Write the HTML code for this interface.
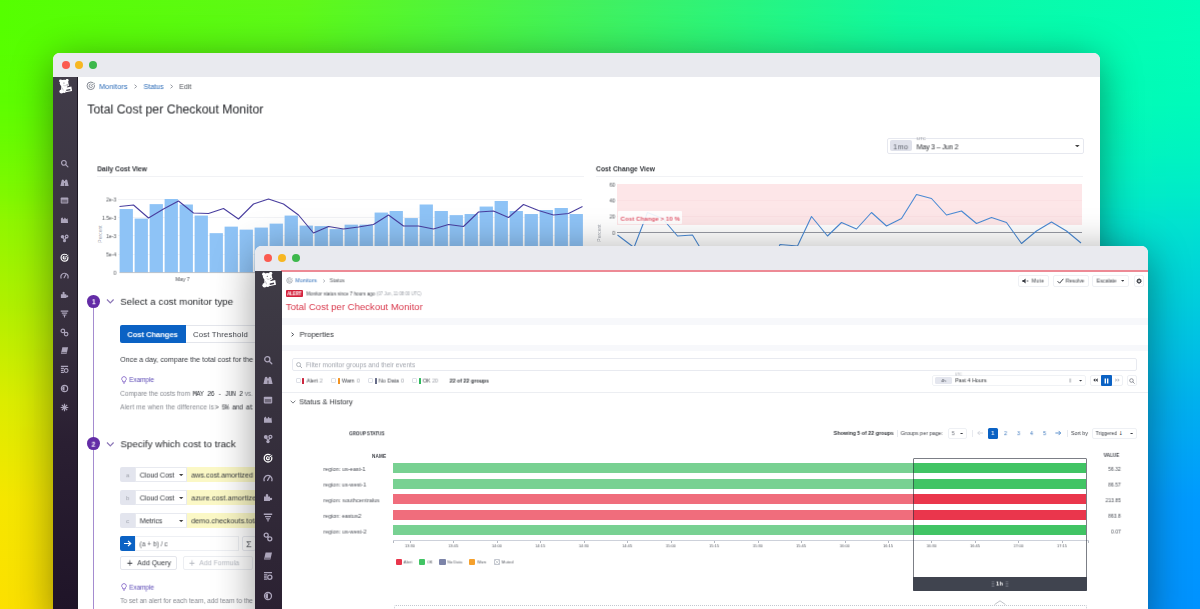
<!DOCTYPE html>
<html lang="en">
<head>
<meta charset="utf-8">
<title>Total Cost per Checkout Monitor</title>
<style>
html,body{margin:0;padding:0;}
html{overflow:hidden;width:1200px;height:609px;}
#stage{position:absolute;left:0;top:0;width:1200px;height:609px;overflow:hidden;}
body{width:1200px;height:609px;overflow:hidden;position:relative;font-family:"Liberation Sans",sans-serif;background:#00ccdd;}
.bg{position:absolute;left:0;top:0;width:1200px;height:609px;}
.bgR{background:linear-gradient(to bottom,#00ffb8 0%,#00f8be 16%,#00e8ce 33%,#00ccdd 50%,#00b0ee 66%,#009aff 82%,#0092ff 100%);}
.bgL{background:linear-gradient(to bottom,#55ff00 0%,#64fc00 16%,#88f800 33%,#b0f000 50%,#dcec00 66%,#f5e600 82%,#fce000 100%);
  -webkit-mask-image:linear-gradient(to right,rgba(0,0,0,1) 0%,rgba(0,0,0,.957) 12.5%,rgba(0,0,0,.844) 25%,rgba(0,0,0,.684) 37.5%,rgba(0,0,0,.5) 50%,rgba(0,0,0,.316) 62.5%,rgba(0,0,0,.156) 75%,rgba(0,0,0,.043) 87.5%,rgba(0,0,0,0) 100%);
  mask-image:linear-gradient(to right,rgba(0,0,0,1) 0%,rgba(0,0,0,.957) 12.5%,rgba(0,0,0,.844) 25%,rgba(0,0,0,.684) 37.5%,rgba(0,0,0,.5) 50%,rgba(0,0,0,.316) 62.5%,rgba(0,0,0,.156) 75%,rgba(0,0,0,.043) 87.5%,rgba(0,0,0,0) 100%);}
.bgT{height:220px;background:linear-gradient(to right,#55ff00 0%,#60f818 25%,#42f060 50%,#10f8a0 75%,#00ffb8 100%);
  -webkit-mask-image:linear-gradient(to bottom,rgba(0,0,0,1) 0%,rgba(0,0,0,.6) 30%,rgba(0,0,0,0) 100%);mask-image:linear-gradient(to bottom,rgba(0,0,0,1) 0%,rgba(0,0,0,.6) 30%,rgba(0,0,0,0) 100%);}
.win{position:absolute;overflow:hidden;background:#fff;border-radius:6.5px 6.5px 0 0;}
.shadow{position:absolute;border-radius:6.5px 6.5px 0 0;}
.win div,.win span,.win svg{position:absolute;}
.win div{box-sizing:border-box;}
.t{white-space:pre;display:block;left:0;top:0;transform-origin:0 0;}
.tl{border-radius:50%;}
</style>
</head>
<body>
<div id="stage">
<div class="bg bgR"></div>
<div class="bg bgL"></div>
<div class="bg bgT"></div>
<div class="shadow" style="left:53.3px;top:52.6px;width:1046.7px;height:570px;box-shadow:0 7px 40px rgba(0,0,0,0.4);"></div>
<div class="win" id="w1" style="left:53.3px;top:52.6px;width:1046.7px;height:570px;">
<div style="left:0.00px;top:0.00px;width:1046.70px;height:24.80px;background:#e9eaef;"></div>
<div class="tl" style="left:8.35px;top:8.30px;width:7.90px;height:7.90px;background:#fb5b50;"></div>
<div class="tl" style="left:22.15px;top:8.30px;width:7.90px;height:7.90px;background:#f7b722;"></div>
<div class="tl" style="left:35.95px;top:8.30px;width:7.90px;height:7.90px;background:#3db84c;"></div>
<div style="left:0.00px;top:24.80px;width:24.60px;height:531.60px;background:linear-gradient(to bottom,#413c49 0%,#362e3d 48%,#2a1f32 69%,#1f1428 100%);border-right:1px solid #1d1824;"></div>
<svg style="left:5.60px;top:26.51px;" width="13.2" height="14.97872340425532" viewBox="0 0 14.1 16"><g fill="#fff"><circle cx="1.7" cy="2.2" r="1.6"/><circle cx="8.7" cy="1.5" r="1.6"/><ellipse cx="5.5" cy="4.6" rx="4.6" ry="3.7"/><path d="M8.4 3.6 L10.9 6.6 L9.4 8 L6 7.6 Z"/><path d="M2.4 7 L8.6 7.2 L8.2 12.6 L2.2 13 Z"/><circle cx="2.6" cy="13.3" r="2.2"/><circle cx="5.6" cy="13.4" r="1.6"/><path d="M6 9.7 L13.2 8.1 L14 12.7 L7.2 14.2 Z"/></g><path d="M7.6 11.6 L12 10.6 L12.2 11.9 L7.9 12.9 Z" fill="#3f3a47"/><path d="M3.3 9.2 L4.6 12.2" stroke="#3f3a47" stroke-width="0.5" opacity="0.6"/><circle cx="5.3" cy="4.3" r="0.6" fill="#3f3a47" opacity="0.8"/><circle cx="8.7" cy="6.3" r="0.65" fill="#3f3a47" opacity="0.8"/><path d="M4.6 6.6 Q6 7.8 7.6 7" fill="none" stroke="#3f3a47" stroke-width="0.45" opacity="0.6"/></svg>
<svg style="left:7.20px;top:106.70px;" width="9" height="9" viewBox="0 0 10 10"><circle cx="4.3" cy="4.3" r="2.6" fill="none" stroke="#aca5bb" stroke-width="1.3" stroke-width="1.05"/><path d="M6.3 6.3 L8.8 8.8" fill="none" stroke="#aca5bb" stroke-width="1.3" stroke-width="1.2" stroke-linecap="round"/></svg>
<svg style="left:7.20px;top:125.20px;" width="9" height="9" viewBox="0 0 10 10"><path d="M0.4 9 L1.9 2.4 Q3.1 1 4.4 2.4 L4.7 9 Z M9.6 9 L8.1 2.4 Q6.9 1 5.6 2.4 L5.3 9 Z" fill="#aca5bb"/><rect x="4" y="3.4" width="2" height="2.2" fill="#aca5bb"/></svg>
<svg style="left:7.20px;top:143.90px;" width="9" height="9" viewBox="0 0 10 10"><rect x="0.8" y="1.8" width="8.4" height="6.6" rx="0.8" fill="#aca5bb"/><rect x="1.8" y="4" width="6.4" height="3.4" fill="#3f3a47" opacity="0.55"/></svg>
<svg style="left:7.20px;top:162.70px;" width="9" height="9" viewBox="0 0 10 10"><path d="M1 8.8 V4 L2.6 2.4 L4 5 L5.4 2.8 L7 4.6 L8.4 3.6 L9 8.8 Z" fill="#aca5bb"/></svg>
<svg style="left:7.20px;top:181.40px;" width="9" height="9" viewBox="0 0 10 10"><circle cx="2.8" cy="3" r="2" fill="#aca5bb"/><circle cx="7.4" cy="2.8" r="1.5" fill="none" stroke="#aca5bb" stroke-width="1.3"/><circle cx="5" cy="7.6" r="1.7" fill="#aca5bb"/><path d="M3.5 4 L5 7 L7 3.6" fill="none" stroke="#aca5bb" stroke-width="1.3" stroke-width="0.9"/></svg>
<svg style="left:7.20px;top:200.20px;" width="9" height="9" viewBox="0 0 10 10"><circle cx="5" cy="5.2" r="3.8" fill="none" stroke="#ffffff" stroke-width="1.3" stroke-width="1.5"/><circle cx="5" cy="5.2" r="1.5" fill="none" stroke="#ffffff" stroke-width="1.3" stroke-width="1.1"/><path d="M5 5.2 L9.4 2.2" stroke="#3f3a47" stroke-width="2.2"/><path d="M5 5.2 L9.2 2.4" stroke="#ffffff" stroke-width="1"/></svg>
<svg style="left:7.20px;top:218.90px;" width="9" height="9" viewBox="0 0 10 10"><path d="M1.4 8.2 A4 4 0 1 1 8.6 8.2" fill="none" stroke="#aca5bb" stroke-width="1.3"/><path d="M4.6 7.4 L6.6 3.8" fill="none" stroke="#aca5bb" stroke-width="1.3" stroke-linecap="round"/></svg>
<svg style="left:7.20px;top:237.70px;" width="9" height="9" viewBox="0 0 10 10"><path d="M1 9 V4.6 H3 Q2.2 2 4 2 Q5.8 2 5 4.6 H7 V6 Q9.2 5.2 9.2 7 Q9.2 8.6 7 8 V9 Z" fill="#aca5bb"/></svg>
<svg style="left:7.20px;top:256.40px;" width="9" height="9" viewBox="0 0 10 10"><path d="M0.8 1.6 H9.2 V3 H0.8 Z M2 4 H8 V5.2 H2 Z M3 6.2 H7 V7.2 H3 Z M4.4 7.2 H5.6 V9.4 H4.4 Z" fill="#aca5bb"/></svg>
<svg style="left:7.20px;top:275.10px;" width="9" height="9" viewBox="0 0 10 10"><circle cx="3.2" cy="3.2" r="2" fill="none" stroke="#aca5bb" stroke-width="1.3"/><circle cx="6.8" cy="6.8" r="2" fill="none" stroke="#aca5bb" stroke-width="1.3"/><path d="M4.4 4.4 L5.6 5.6" fill="none" stroke="#aca5bb" stroke-width="1.3"/></svg>
<svg style="left:7.20px;top:293.90px;" width="9" height="9" viewBox="0 0 10 10"><path d="M2.6 1.4 H9 L7.4 8.6 H1 Z" fill="#aca5bb"/><path d="M1.6 7.2 H7.4" stroke="#3f3a47" stroke-width="0.7"/></svg>
<svg style="left:7.20px;top:312.70px;" width="9" height="9" viewBox="0 0 10 10"><path d="M1 1.6 H9 M1 3.8 H4.4 M1 6 H3.8 M1 8.2 H4.4" fill="none" stroke="#aca5bb" stroke-width="1.3" stroke-width="1.1"/><circle cx="6.8" cy="6.2" r="2.1" fill="none" stroke="#aca5bb" stroke-width="1.3" stroke-width="1.1"/></svg>
<svg style="left:7.20px;top:331.40px;" width="9" height="9" viewBox="0 0 10 10"><circle cx="5" cy="5" r="3.5" fill="none" stroke="#aca5bb" stroke-width="1.3" stroke-width="1.1"/><path d="M5 2.4 A2.6 2.6 0 0 0 5 7.6 Z" fill="#aca5bb"/></svg>
<svg style="left:7.20px;top:350.10px;" width="9" height="9" viewBox="0 0 10 10"><circle cx="5" cy="5" r="2.2" fill="#aca5bb"/><path d="M5 0.8 V9.2 M0.8 5 H9.2 M2 2 L8 8 M8 2 L2 8" fill="none" stroke="#aca5bb" stroke-width="1.3" stroke-width="1"/></svg>
<svg style="left:33.10px;top:28.80px;" width="9.6" height="9.6" viewBox="0 0 10 10"><circle cx="5" cy="5" r="3.9" fill="none" stroke="#80858e" stroke-width="1"/><circle cx="5" cy="5" r="1.8" fill="none" stroke="#80858e" stroke-width="0.9"/><path d="M5 5 L9.6 2" stroke="#fff" stroke-width="2.2"/><path d="M5 5 L9.2 2.3" stroke="#80858e" stroke-width="0.9"/></svg>
<span class="t" style="transform:perspective(100000px) translate3d(46.20px,30.00px,1px);font-size:7.21px;line-height:7.21px;letter-spacing:0.107px;color:#2c6cb8;">Monitors</span>
<svg style="left:80.20px;top:31.30px;" width="5" height="5" viewBox="0 0 5 5"><path d="M1.5 0.7 L3.7 2.5 L1.5 4.3" fill="none" stroke="#9a9ea6" stroke-width="1"/></svg>
<span class="t" style="transform:perspective(100000px) translate3d(90.50px,30.00px,1px);font-size:7.21px;line-height:7.21px;letter-spacing:-0.073px;color:#2c6cb8;">Status</span>
<svg style="left:116.00px;top:31.30px;" width="5" height="5" viewBox="0 0 5 5"><path d="M1.5 0.7 L3.7 2.5 L1.5 4.3" fill="none" stroke="#9a9ea6" stroke-width="1"/></svg>
<span class="t" style="transform:perspective(100000px) translate3d(126.20px,30.00px,1px);font-size:7.21px;line-height:7.21px;letter-spacing:-0.081px;color:#55595f;">Edit</span>
<span class="t" style="transform:perspective(100000px) translate3d(34.30px,50.44px,1px);font-size:12.34px;line-height:12.34px;letter-spacing:0.000px;color:#24262a;">Total Cost per Checkout Monitor</span>
<div style="left:834.20px;top:85.80px;width:197.00px;height:15.40px;background:#fff;border:1px solid #e6e8ef;border-radius:2px;"></div>
<div style="left:837.00px;top:87.90px;width:21.50px;height:10.60px;background:#dfe1ea;border-radius:2px;"></div>
<span class="t" style="transform:perspective(100000px) translate3d(840.20px,90.30px,1px);font-size:7.21px;line-height:7.21px;letter-spacing:0.425px;color:#5a5e68;">1mo</span>
<span class="t" style="transform:perspective(100000px) translate3d(863.70px,84.10px,1px);font-size:4.38px;line-height:4.38px;letter-spacing:0.000px;color:#85888f;">UTC</span>
<span class="t" style="transform:perspective(100000px) translate3d(863.50px,91.30px,1px);font-size:7.11px;line-height:7.11px;letter-spacing:-0.228px;color:#2f3237;">May 3 – Jun 2</span>
<svg style="left:1022.00px;top:92.25px;" width="4.6" height="2.3" viewBox="0 0 4 2"><path d="M0 0 H4 L2 2 Z" fill="#444"/></svg>
<span class="t" style="transform:perspective(100000px) translate3d(44.30px,113.30px,1px);font-size:6.75px;line-height:6.75px;letter-spacing:-0.023px;color:#2f3237;font-weight:700;">Daily Cost View</span>
<div style="left:43.70px;top:123.40px;width:487.50px;height:0.80px;background:#f1f2f5;"></div>
<span class="t" style="transform:perspective(100000px) translate3d(53.29px,144.44px,1px);font-size:5.00px;line-height:5.00px;letter-spacing:0.000px;color:#44484e;">2e-3</span>
<div style="left:65.20px;top:146.10px;width:464.00px;height:0.60px;background:#f2f3f6;"></div>
<span class="t" style="transform:perspective(100000px) translate3d(49.12px,162.76px,1px);font-size:5.00px;line-height:5.00px;letter-spacing:0.000px;color:#44484e;">1.5e-3</span>
<div style="left:65.20px;top:164.42px;width:464.00px;height:0.60px;background:#f2f3f6;"></div>
<span class="t" style="transform:perspective(100000px) translate3d(53.29px,181.09px,1px);font-size:5.00px;line-height:5.00px;letter-spacing:0.000px;color:#44484e;">1e-3</span>
<div style="left:65.20px;top:182.75px;width:464.00px;height:0.60px;background:#f2f3f6;"></div>
<span class="t" style="transform:perspective(100000px) translate3d(53.29px,199.42px,1px);font-size:5.00px;line-height:5.00px;letter-spacing:0.000px;color:#44484e;">5e-4</span>
<div style="left:65.20px;top:201.08px;width:464.00px;height:0.60px;background:#f2f3f6;"></div>
<span class="t" style="transform:perspective(100000px) translate3d(60.52px,217.74px,1px);font-size:5.00px;line-height:5.00px;letter-spacing:0.000px;color:#44484e;">0</span>
<span class="t" style="left:37.00px;top:178.40px;width:20px;text-align:center;font-size:5px;line-height:6px;color:#a4a8b0;transform-origin:50% 50%;transform:rotate(-90deg);">Percent</span>
<svg style="left:44.40px;top:137.80px;" width="490" height="90" viewBox="0 0 490 90"><g fill="#8ec3f6"><rect x="21.60" y="19.04" width="13.3" height="63.26"/><rect x="36.60" y="28.57" width="13.3" height="53.73"/><rect x="51.60" y="14.13" width="13.3" height="68.17"/><rect x="66.60" y="9.00" width="13.3" height="73.30"/><rect x="81.60" y="14.50" width="13.3" height="67.80"/><rect x="96.60" y="25.57" width="13.3" height="56.73"/><rect x="111.60" y="43.16" width="13.3" height="39.14"/><rect x="126.60" y="36.63" width="13.3" height="45.67"/><rect x="141.60" y="39.64" width="13.3" height="42.66"/><rect x="156.60" y="37.59" width="13.3" height="44.71"/><rect x="171.60" y="33.63" width="13.3" height="48.67"/><rect x="186.60" y="25.57" width="13.3" height="56.73"/><rect x="201.60" y="35.61" width="13.3" height="46.69"/><rect x="216.60" y="36.12" width="13.3" height="46.18"/><rect x="231.60" y="39.13" width="13.3" height="43.17"/><rect x="246.60" y="34.66" width="13.3" height="47.65"/><rect x="261.60" y="34.66" width="13.3" height="47.65"/><rect x="276.60" y="22.56" width="13.3" height="59.74"/><rect x="291.60" y="21.02" width="13.3" height="61.28"/><rect x="306.60" y="28.06" width="13.3" height="54.24"/><rect x="321.60" y="14.50" width="13.3" height="67.80"/><rect x="336.60" y="21.02" width="13.3" height="61.28"/><rect x="351.60" y="25.13" width="13.3" height="57.17"/><rect x="366.60" y="24.03" width="13.3" height="58.27"/><rect x="381.60" y="16.55" width="13.3" height="65.75"/><rect x="396.60" y="10.98" width="13.3" height="71.32"/><rect x="411.60" y="21.02" width="13.3" height="61.28"/><rect x="426.60" y="24.03" width="13.3" height="58.27"/><rect x="441.60" y="20.00" width="13.3" height="62.31"/><rect x="456.60" y="18.02" width="13.3" height="64.28"/><rect x="471.60" y="24.03" width="13.3" height="58.27"/></g><path d="M21.5 82.6 H485" stroke="#9aa0aa" stroke-width="0.6"/><polyline points="21.5,16.5 35.5,15.0 50.5,28.0 65.5,19.0 80.5,11.0 95.5,23.0 110.5,23.5 125.5,18.5 140.5,29.0 155.5,14.0 170.5,9.0 185.5,14.0 200.5,25.0 215.5,43.0 230.5,36.5 245.5,39.0 260.5,37.0 275.5,34.5 290.5,25.0 305.5,36.0 320.5,36.0 335.5,39.0 350.5,34.5 365.5,36.5 380.5,22.0 395.5,21.0 410.5,27.5 425.5,14.5 440.5,20.5 455.5,25.0 470.5,23.5 484.5,16.5" fill="none" stroke="#4a3f9f" stroke-width="1.1" stroke-linejoin="round"/></svg>
<span class="t" style="transform:perspective(100000px) translate3d(122.50px,224.04px,1px);font-size:5.15px;line-height:5.15px;letter-spacing:0.035px;color:#44484e;">May 7</span>
<span class="t" style="transform:perspective(100000px) translate3d(542.90px,113.30px,1px);font-size:6.75px;line-height:6.75px;letter-spacing:0.015px;color:#2f3237;font-weight:700;">Cost Change View</span>
<div style="left:542.70px;top:123.40px;width:487.50px;height:0.80px;background:#f1f2f5;"></div>
<div style="left:564.20px;top:131.40px;width:464.50px;height:40.60px;background:#fde6e8;"></div>
<div style="left:564.20px;top:147.10px;width:464.50px;height:0.60px;background:#fbe0e3;"></div>
<div style="left:564.20px;top:163.10px;width:464.50px;height:0.60px;background:#fbe0e3;"></div>
<span class="t" style="transform:perspective(100000px) translate3d(556.54px,129.64px,1px);font-size:5.00px;line-height:5.00px;letter-spacing:0.000px;color:#44484e;">60</span>
<span class="t" style="transform:perspective(100000px) translate3d(556.54px,145.44px,1px);font-size:5.00px;line-height:5.00px;letter-spacing:0.000px;color:#44484e;">40</span>
<span class="t" style="transform:perspective(100000px) translate3d(556.54px,161.44px,1px);font-size:5.00px;line-height:5.00px;letter-spacing:0.000px;color:#44484e;">20</span>
<span class="t" style="transform:perspective(100000px) translate3d(559.32px,177.84px,1px);font-size:5.00px;line-height:5.00px;letter-spacing:0.000px;color:#44484e;">0</span>
<div style="left:564.20px;top:179.50px;width:464.50px;height:0.70px;background:#979ba4;"></div>
<span class="t" style="left:536.20px;top:177.40px;width:20px;text-align:center;font-size:5px;line-height:6px;color:#a4a8b0;transform-origin:50% 50%;transform:rotate(-90deg);">Percent</span>
<svg style="left:542.70px;top:127.40px;" width="490" height="110" viewBox="0 0 490 110"><polyline points="21.5,55.0 38.0,67.5 51.5,32.5 66.5,38.5 81.5,56.0 96.5,55.0 104.0,67.5 119.0,100.0 169.0,100.0 184.0,64.5 201.5,66.0 215.5,36.5 231.5,56.0 245.5,42.5 260.5,49.0 275.5,32.5 290.5,46.0 305.5,38.5 320.5,14.5 335.5,18.5 350.5,35.0 365.5,31.0 380.5,43.5 395.5,37.5 410.5,42.5 425.5,63.5 440.5,51.0 455.5,42.0 470.5,51.0 485.0,63.0" fill="none" stroke="#4a8ad4" stroke-width="1.1" stroke-linejoin="round"/></svg>
<div style="left:564.90px;top:158.70px;width:64.20px;height:12.60px;background:#ffffff;border-radius:1px;opacity:.9;"></div>
<span class="t" style="transform:perspective(100000px) translate3d(567.50px,162.74px,1px);font-size:6.00px;line-height:6.00px;letter-spacing:0.105px;color:#e2566a;font-weight:700;">Cost Change &gt; 10 %</span>
<div style="left:39.90px;top:248.40px;width:1.00px;height:320.00px;background:#a58cd0;"></div>
<div style="left:34.00px;top:242.30px;width:12.80px;height:12.80px;background:#632ca6;border-radius:50%;"></div>
<span class="t" style="transform:perspective(100000px) translate3d(39.00px,246.24px,1px);font-size:6.50px;line-height:6.50px;letter-spacing:-0.815px;color:#fff;font-weight:700;">1</span>
<svg style="left:52.70px;top:244.90px;" width="8.6" height="8.6" viewBox="0 0 7 7"><path d="M0.8 2 L3.5 4.8 L6.2 2" fill="none" stroke="#8d78b8" stroke-width="1"/></svg>
<span class="t" style="transform:perspective(100000px) translate3d(67.20px,243.81px,1px);font-size:9.79px;line-height:9.79px;letter-spacing:0.018px;color:#24262a;">Select a cost monitor type</span>
<div style="left:67.20px;top:272.10px;width:65.50px;height:18.80px;background:#0b62c4;border-radius:2px 0 0 2px;"></div>
<span class="t" style="transform:perspective(100000px) translate3d(74.30px,278.10px,1px);font-size:7.73px;line-height:7.73px;letter-spacing:-0.114px;color:#fff;font-weight:700;">Cost Changes</span>
<div style="left:132.70px;top:272.10px;width:75.00px;height:18.80px;background:#fff;border:1px solid #e4e6ec;border-left:none;"></div>
<span class="t" style="transform:perspective(100000px) translate3d(140.00px,278.04px,1px);font-size:7.73px;line-height:7.73px;letter-spacing:0.195px;color:#3a3d44;">Cost Threshold</span>
<span class="t" style="transform:perspective(100000px) translate3d(67.20px,303.90px,1px);font-size:7.11px;line-height:7.11px;letter-spacing:0.029px;color:#33363c;">Once a day, compare the total cost for the</span>
<svg style="left:67.60px;top:323.00px;" width="6" height="8" viewBox="0 0 6 8"><path d="M3 0.6 A2.3 2.3 0 0 1 4.3 4.8 V5.8 H1.7 V4.8 A2.3 2.3 0 0 1 3 0.6 Z M2 7 H4" fill="none" stroke="#7c5cc4" stroke-width="0.8"/></svg>
<span class="t" style="transform:perspective(100000px) translate3d(76.30px,324.04px,1px);font-size:6.49px;line-height:6.49px;letter-spacing:-0.064px;color:#5a48b5;">Example</span>
<span class="t" style="transform:perspective(100000px) translate3d(67.20px,337.84px,1px);font-size:6.59px;line-height:6.59px;letter-spacing:-0.014px;color:#85888f;">Compare the costs from</span>
<span class="t" style="transform:perspective(100000px) translate3d(139.70px,337.90px,1px);font-size:6.80px;line-height:6.80px;letter-spacing:-0.523px;color:#33363c;font-family:'Liberation Mono',monospace;">MAY 26 - JUN 2</span>
<span class="t" style="transform:perspective(100000px) translate3d(191.70px,337.84px,1px);font-size:6.59px;line-height:6.59px;letter-spacing:-0.340px;color:#85888f;">vs.</span>
<span class="t" style="transform:perspective(100000px) translate3d(67.20px,351.34px,1px);font-size:6.59px;line-height:6.59px;letter-spacing:0.118px;color:#85888f;">Alert me when the difference is</span>
<span class="t" style="transform:perspective(100000px) translate3d(161.70px,351.40px,1px);font-size:6.80px;line-height:6.80px;letter-spacing:-0.626px;color:#33363c;font-family:'Liberation Mono',monospace;">&gt; 5% and at</span>
<div style="left:34.00px;top:384.80px;width:12.80px;height:12.80px;background:#632ca6;border-radius:50%;"></div>
<span class="t" style="transform:perspective(100000px) translate3d(38.60px,388.74px,1px);font-size:6.50px;line-height:6.50px;letter-spacing:0.185px;color:#fff;font-weight:700;">2</span>
<svg style="left:52.70px;top:387.30px;" width="8.6" height="8.6" viewBox="0 0 7 7"><path d="M0.8 2 L3.5 4.8 L6.2 2" fill="none" stroke="#8d78b8" stroke-width="1"/></svg>
<span class="t" style="transform:perspective(100000px) translate3d(67.40px,386.21px,1px);font-size:9.79px;line-height:9.79px;letter-spacing:0.006px;color:#24262a;">Specify which cost to track</span>
<div style="left:67.20px;top:414.90px;width:14.80px;height:14.50px;background:#e3e5ee;border-radius:2px 0 0 2px;"></div>
<span class="t" style="transform:perspective(100000px) translate3d(73.10px,419.20px,1px);font-size:6.00px;line-height:6.00px;letter-spacing:-0.337px;color:#a0a4ae;">a</span>
<div style="left:82.00px;top:414.90px;width:52.00px;height:14.50px;background:#fff;border:1px solid #e8eaf0;"></div>
<span class="t" style="transform:perspective(100000px) translate3d(86.70px,418.50px,1px);font-size:7.21px;line-height:7.21px;letter-spacing:-0.127px;color:#33363c;">Cloud Cost</span>
<svg style="left:126.10px;top:421.20px;" width="4.4" height="2.2" viewBox="0 0 4 2"><path d="M0 0 H4 L2 2 Z" fill="#444"/></svg>
<div style="left:134.00px;top:414.90px;width:120.00px;height:14.50px;background:#fbf8c6;"></div>
<span class="t" style="transform:perspective(100000px) translate3d(138.30px,418.50px,1px);font-size:7.21px;line-height:7.21px;letter-spacing:0.005px;color:#33363c;">aws.cost.amortized</span>
<div style="left:67.20px;top:437.80px;width:14.80px;height:14.50px;background:#e3e5ee;border-radius:2px 0 0 2px;"></div>
<span class="t" style="transform:perspective(100000px) translate3d(73.10px,442.10px,1px);font-size:6.00px;line-height:6.00px;letter-spacing:-0.337px;color:#a0a4ae;">b</span>
<div style="left:82.00px;top:437.80px;width:52.00px;height:14.50px;background:#fff;border:1px solid #e8eaf0;"></div>
<span class="t" style="transform:perspective(100000px) translate3d(86.70px,441.40px,1px);font-size:7.21px;line-height:7.21px;letter-spacing:-0.127px;color:#33363c;">Cloud Cost</span>
<svg style="left:126.10px;top:444.10px;" width="4.4" height="2.2" viewBox="0 0 4 2"><path d="M0 0 H4 L2 2 Z" fill="#444"/></svg>
<div style="left:134.00px;top:437.80px;width:120.00px;height:14.50px;background:#fbf8c6;"></div>
<span class="t" style="transform:perspective(100000px) translate3d(138.30px,441.40px,1px);font-size:7.21px;line-height:7.21px;letter-spacing:0.124px;color:#33363c;">azure.cost.amortized</span>
<div style="left:67.20px;top:460.70px;width:14.80px;height:14.50px;background:#e3e5ee;border-radius:2px 0 0 2px;"></div>
<span class="t" style="transform:perspective(100000px) translate3d(73.10px,465.00px,1px);font-size:6.00px;line-height:6.00px;letter-spacing:0.000px;color:#a0a4ae;">c</span>
<div style="left:82.00px;top:460.70px;width:52.00px;height:14.50px;background:#fff;border:1px solid #e8eaf0;"></div>
<span class="t" style="transform:perspective(100000px) translate3d(86.70px,464.30px,1px);font-size:7.21px;line-height:7.21px;letter-spacing:-0.090px;color:#33363c;">Metrics</span>
<svg style="left:126.10px;top:467.00px;" width="4.4" height="2.2" viewBox="0 0 4 2"><path d="M0 0 H4 L2 2 Z" fill="#444"/></svg>
<div style="left:134.00px;top:460.70px;width:120.00px;height:14.50px;background:#fbf8c6;"></div>
<span class="t" style="transform:perspective(100000px) translate3d(138.30px,464.30px,1px);font-size:7.21px;line-height:7.21px;letter-spacing:0.043px;color:#33363c;">demo.checkouts.total</span>
<div style="left:67.20px;top:483.80px;width:14.80px;height:14.50px;background:#0b62c4;border-radius:2px 0 0 2px;"></div>
<svg style="left:70.20px;top:487.40px;" width="9" height="7" viewBox="0 0 9 7"><path d="M1 3.5 H7.6 M5 1 L7.8 3.5 L5 6" fill="none" stroke="#fff" stroke-width="1.1"/></svg>
<div style="left:82.00px;top:483.80px;width:104.00px;height:14.50px;background:#fff;border:1px solid #eef0f4;"></div>
<span class="t" style="transform:perspective(100000px) translate3d(86.50px,488.30px,1px);font-size:6.63px;line-height:6.63px;letter-spacing:0.000px;color:#55595f;">(a + b) / c</span>
<div style="left:189.00px;top:483.80px;width:14.00px;height:14.50px;background:#fff;border:1px solid #e8eaf0;border-radius:2px;"></div>
<span class="t" style="transform:perspective(100000px) translate3d(193.10px,487.21px,1px);font-size:9.00px;line-height:9.00px;letter-spacing:0.436px;color:#55595f;">Σ</span>
<div style="left:67.20px;top:503.00px;width:56.20px;height:14.60px;background:#fff;border:1px solid #e4e6ec;border-radius:2px;"></div>
<span class="t" style="transform:perspective(100000px) translate3d(73.90px,505.70px,1px);font-size:10.00px;line-height:10.00px;letter-spacing:-0.040px;color:#3a3d44;">+</span>
<span class="t" style="transform:perspective(100000px) translate3d(84.30px,506.24px,1px);font-size:7.00px;line-height:7.00px;letter-spacing:0.038px;color:#33363c;">Add Query</span>
<div style="left:129.50px;top:503.00px;width:70.00px;height:14.60px;background:#fff;border:1px solid #eceef2;border-radius:2px;"></div>
<span class="t" style="transform:perspective(100000px) translate3d(136.10px,505.70px,1px);font-size:10.00px;line-height:10.00px;letter-spacing:-0.040px;color:#b4b8c0;">+</span>
<span class="t" style="transform:perspective(100000px) translate3d(146.30px,506.24px,1px);font-size:7.00px;line-height:7.00px;letter-spacing:-0.025px;color:#b4b8c0;">Add Formula</span>
<svg style="left:67.60px;top:530.80px;" width="6" height="8" viewBox="0 0 6 8"><path d="M3 0.6 A2.3 2.3 0 0 1 4.3 4.8 V5.8 H1.7 V4.8 A2.3 2.3 0 0 1 3 0.6 Z M2 7 H4" fill="none" stroke="#7c5cc4" stroke-width="0.8"/></svg>
<span class="t" style="transform:perspective(100000px) translate3d(76.30px,531.64px,1px);font-size:6.49px;line-height:6.49px;letter-spacing:-0.064px;color:#5a48b5;">Example</span>
<span class="t" style="transform:perspective(100000px) translate3d(67.20px,545.04px,1px);font-size:6.59px;line-height:6.59px;letter-spacing:0.001px;color:#85888f;">To set an alert for each team, add team to the</span>
</div>
<div class="shadow" style="left:255.4px;top:246.2px;width:892.2px;height:380px;box-shadow:0 7px 40px rgba(0,0,0,0.4);"></div>
<div class="win" id="w2" style="left:255.4px;top:246.2px;width:892.2px;height:380px;">
<div style="left:0.00px;top:0.00px;width:892.20px;height:24.90px;background:#e9eaef;"></div>
<div style="left:26.10px;top:24.00px;width:892.20px;height:1.80px;background:#ed8a95;"></div>
<div class="tl" style="left:8.50px;top:8.00px;width:8.20px;height:8.20px;background:#fb5b50;"></div>
<div class="tl" style="left:22.40px;top:8.00px;width:8.20px;height:8.20px;background:#f7b722;"></div>
<div class="tl" style="left:36.30px;top:8.00px;width:8.20px;height:8.20px;background:#3db84c;"></div>
<div style="left:0.00px;top:24.70px;width:26.20px;height:338.80px;background:linear-gradient(to bottom,#3f3c46 0%,#2b2132 100%);"></div>
<svg style="left:6.45px;top:25.90px;" width="14.1" height="16.0" viewBox="0 0 14.1 16"><g fill="#fff"><circle cx="1.7" cy="2.2" r="1.6"/><circle cx="8.7" cy="1.5" r="1.6"/><ellipse cx="5.5" cy="4.6" rx="4.6" ry="3.7"/><path d="M8.4 3.6 L10.9 6.6 L9.4 8 L6 7.6 Z"/><path d="M2.4 7 L8.6 7.2 L8.2 12.6 L2.2 13 Z"/><circle cx="2.6" cy="13.3" r="2.2"/><circle cx="5.6" cy="13.4" r="1.6"/><path d="M6 9.7 L13.2 8.1 L14 12.7 L7.2 14.2 Z"/></g><path d="M7.6 11.6 L12 10.6 L12.2 11.9 L7.9 12.9 Z" fill="#3f3a47"/><path d="M3.3 9.2 L4.6 12.2" stroke="#3f3a47" stroke-width="0.5" opacity="0.6"/><circle cx="5.3" cy="4.3" r="0.6" fill="#3f3a47" opacity="0.8"/><circle cx="8.7" cy="6.3" r="0.65" fill="#3f3a47" opacity="0.8"/><path d="M4.6 6.6 Q6 7.8 7.6 7" fill="none" stroke="#3f3a47" stroke-width="0.45" opacity="0.6"/></svg>
<svg style="left:7.20px;top:109.20px;" width="10" height="10" viewBox="0 0 10 10"><circle cx="4.3" cy="4.3" r="2.6" fill="none" stroke="#aca5bb" stroke-width="1.3" stroke-width="1.05"/><path d="M6.3 6.3 L8.8 8.8" fill="none" stroke="#aca5bb" stroke-width="1.3" stroke-width="1.2" stroke-linecap="round"/></svg>
<svg style="left:7.20px;top:128.80px;" width="10" height="10" viewBox="0 0 10 10"><path d="M0.4 9 L1.9 2.4 Q3.1 1 4.4 2.4 L4.7 9 Z M9.6 9 L8.1 2.4 Q6.9 1 5.6 2.4 L5.3 9 Z" fill="#aca5bb"/><rect x="4" y="3.4" width="2" height="2.2" fill="#aca5bb"/></svg>
<svg style="left:7.20px;top:148.50px;" width="10" height="10" viewBox="0 0 10 10"><rect x="0.8" y="1.8" width="8.4" height="6.6" rx="0.8" fill="#aca5bb"/><rect x="1.8" y="4" width="6.4" height="3.4" fill="#3f3a47" opacity="0.55"/></svg>
<svg style="left:7.20px;top:168.10px;" width="10" height="10" viewBox="0 0 10 10"><path d="M1 8.8 V4 L2.6 2.4 L4 5 L5.4 2.8 L7 4.6 L8.4 3.6 L9 8.8 Z" fill="#aca5bb"/></svg>
<svg style="left:7.20px;top:187.60px;" width="10" height="10" viewBox="0 0 10 10"><circle cx="2.8" cy="3" r="2" fill="#aca5bb"/><circle cx="7.4" cy="2.8" r="1.5" fill="none" stroke="#aca5bb" stroke-width="1.3"/><circle cx="5" cy="7.6" r="1.7" fill="#aca5bb"/><path d="M3.5 4 L5 7 L7 3.6" fill="none" stroke="#aca5bb" stroke-width="1.3" stroke-width="0.9"/></svg>
<svg style="left:7.20px;top:207.10px;" width="10" height="10" viewBox="0 0 10 10"><circle cx="5" cy="5.2" r="3.8" fill="none" stroke="#ffffff" stroke-width="1.3" stroke-width="1.5"/><circle cx="5" cy="5.2" r="1.5" fill="none" stroke="#ffffff" stroke-width="1.3" stroke-width="1.1"/><path d="M5 5.2 L9.4 2.2" stroke="#3f3a47" stroke-width="2.2"/><path d="M5 5.2 L9.2 2.4" stroke="#ffffff" stroke-width="1"/></svg>
<svg style="left:7.20px;top:226.80px;" width="10" height="10" viewBox="0 0 10 10"><path d="M1.4 8.2 A4 4 0 1 1 8.6 8.2" fill="none" stroke="#aca5bb" stroke-width="1.3"/><path d="M4.6 7.4 L6.6 3.8" fill="none" stroke="#aca5bb" stroke-width="1.3" stroke-linecap="round"/></svg>
<svg style="left:7.20px;top:246.30px;" width="10" height="10" viewBox="0 0 10 10"><path d="M1 9 V4.6 H3 Q2.2 2 4 2 Q5.8 2 5 4.6 H7 V6 Q9.2 5.2 9.2 7 Q9.2 8.6 7 8 V9 Z" fill="#aca5bb"/></svg>
<svg style="left:7.20px;top:265.80px;" width="10" height="10" viewBox="0 0 10 10"><path d="M0.8 1.6 H9.2 V3 H0.8 Z M2 4 H8 V5.2 H2 Z M3 6.2 H7 V7.2 H3 Z M4.4 7.2 H5.6 V9.4 H4.4 Z" fill="#aca5bb"/></svg>
<svg style="left:7.20px;top:285.50px;" width="10" height="10" viewBox="0 0 10 10"><circle cx="3.2" cy="3.2" r="2" fill="none" stroke="#aca5bb" stroke-width="1.3"/><circle cx="6.8" cy="6.8" r="2" fill="none" stroke="#aca5bb" stroke-width="1.3"/><path d="M4.4 4.4 L5.6 5.6" fill="none" stroke="#aca5bb" stroke-width="1.3"/></svg>
<svg style="left:7.20px;top:305.10px;" width="10" height="10" viewBox="0 0 10 10"><path d="M2.6 1.4 H9 L7.4 8.6 H1 Z" fill="#aca5bb"/><path d="M1.6 7.2 H7.4" stroke="#3f3a47" stroke-width="0.7"/></svg>
<svg style="left:7.20px;top:324.80px;" width="10" height="10" viewBox="0 0 10 10"><path d="M1 1.6 H9 M1 3.8 H4.4 M1 6 H3.8 M1 8.2 H4.4" fill="none" stroke="#aca5bb" stroke-width="1.3" stroke-width="1.1"/><circle cx="6.8" cy="6.2" r="2.1" fill="none" stroke="#aca5bb" stroke-width="1.3" stroke-width="1.1"/></svg>
<svg style="left:7.20px;top:344.40px;" width="10" height="10" viewBox="0 0 10 10"><circle cx="5" cy="5" r="3.5" fill="none" stroke="#aca5bb" stroke-width="1.3" stroke-width="1.1"/><path d="M5 2.4 A2.6 2.6 0 0 0 5 7.6 Z" fill="#aca5bb"/></svg>
<svg style="left:30.30px;top:30.90px;" width="7" height="7" viewBox="0 0 10 10"><circle cx="5" cy="5" r="3.9" fill="none" stroke="#8d929b" stroke-width="1"/><circle cx="5" cy="5" r="1.8" fill="none" stroke="#8d929b" stroke-width="0.9"/><path d="M5 5 L9.6 2" stroke="#fff" stroke-width="2.2"/><path d="M5 5 L9.2 2.3" stroke="#8d929b" stroke-width="0.9"/></svg>
<span class="t" style="transform:perspective(100000px) translate3d(40.40px,32.24px,1px);font-size:5.46px;line-height:5.46px;letter-spacing:0.083px;color:#2c6cb8;">Monitors</span>
<svg style="left:66.20px;top:32.50px;" width="4" height="4" viewBox="0 0 5 5"><path d="M1.5 0.7 L3.7 2.5 L1.5 4.3" fill="none" stroke="#a8acb4" stroke-width="1"/></svg>
<span class="t" style="transform:perspective(100000px) translate3d(74.60px,32.24px,1px);font-size:5.46px;line-height:5.46px;letter-spacing:-0.080px;color:#55595f;">Status</span>
<div style="left:30.80px;top:43.80px;width:16.80px;height:7.20px;background:#d4213c;border-radius:1px;"></div>
<span class="t" style="transform:perspective(100000px) translate3d(32.20px,46.34px,1px);font-size:4.60px;line-height:4.60px;letter-spacing:-0.266px;color:#fff;font-weight:700;">ALERT</span>
<span class="t" style="transform:perspective(100000px) translate3d(51.40px,46.46px,1px);font-size:4.63px;line-height:4.63px;letter-spacing:0.053px;color:#3a3d44;">Monitor status since 7 hours ago</span>
<span class="t" style="transform:perspective(100000px) translate3d(121.60px,46.30px,1px);font-size:4.43px;line-height:4.43px;letter-spacing:-0.044px;color:#9a9ea6;">(07 Jun, 11:08:00 UTC)</span>
<span class="t" style="transform:perspective(100000px) translate3d(30.80px,56.01px,1px);font-size:9.58px;line-height:9.58px;letter-spacing:0.000px;color:#d8364a;">Total Cost per Checkout Monitor</span>
<div style="left:762.80px;top:28.80px;width:31.00px;height:11.80px;background:#fff;border:1px solid #eef0f4;border-radius:2px;"></div>
<div style="left:797.60px;top:28.80px;width:35.80px;height:11.80px;background:#fff;border:1px solid #eef0f4;border-radius:2px;"></div>
<div style="left:837.10px;top:28.80px;width:36.70px;height:11.80px;background:#fff;border:1px solid #eef0f4;border-radius:2px;"></div>
<div style="left:878.40px;top:28.80px;width:10.00px;height:11.80px;background:#fff;border:1px solid #eef0f4;border-radius:2px;"></div>
<svg style="left:767.00px;top:31.80px;" width="7" height="6" viewBox="0 0 7 6"><path d="M0.4 2 H1.8 L3.6 0.4 V5.6 L1.8 4 H0.4 Z" fill="#3a3d44"/><path d="M4.6 3 H6.4" stroke="#3a3d44" stroke-width="0.8"/></svg>
<span class="t" style="transform:perspective(100000px) translate3d(776.60px,32.54px,1px);font-size:5.25px;line-height:5.25px;letter-spacing:0.232px;color:#3a3d44;">Mute</span>
<svg style="left:801.20px;top:31.80px;" width="7" height="6" viewBox="0 0 7 6"><path d="M0.6 3.2 L2.6 5.2 L6.4 0.8" fill="none" stroke="#3a3d44" stroke-width="1"/></svg>
<span class="t" style="transform:perspective(100000px) translate3d(810.60px,32.54px,1px);font-size:5.25px;line-height:5.25px;letter-spacing:-0.052px;color:#3a3d44;">Resolve</span>
<span class="t" style="transform:perspective(100000px) translate3d(841.60px,32.54px,1px);font-size:5.25px;line-height:5.25px;letter-spacing:-0.042px;color:#3a3d44;">Escalate</span>
<svg style="left:865.70px;top:33.95px;" width="3.4" height="1.7" viewBox="0 0 4 2"><path d="M0 0 H4 L2 2 Z" fill="#3a3d44"/></svg>
<svg style="left:880.30px;top:31.70px;" width="6.2" height="6.2" viewBox="0 0 6.2 6.2"><circle cx="3.1" cy="3.1" r="1.7" fill="none" stroke="#4a4e56" stroke-width="1.1"/><path d="M3.1 0.2 V6 M0.2 3.1 H6 M1.05 1.05 L5.15 5.15 M5.15 1.05 L1.05 5.15" stroke="#4a4e56" stroke-width="0.8"/><circle cx="3.1" cy="3.1" r="0.95" fill="#fff"/></svg>
<div style="left:26.60px;top:71.60px;width:866.00px;height:6.80px;background:#f7f8fb;"></div>
<svg style="left:35.10px;top:85.90px;" width="5" height="5" viewBox="0 0 5 5"><path d="M1.5 0.7 L3.7 2.5 L1.5 4.3" fill="none" stroke="#55595f" stroke-width="1"/></svg>
<span class="t" style="transform:perspective(100000px) translate3d(44.60px,84.90px,1px);font-size:7.47px;line-height:7.47px;letter-spacing:0.015px;color:#2f3237;">Properties</span>
<div style="left:26.60px;top:98.60px;width:866.00px;height:6.00px;background:#f7f8fb;"></div>
<div style="left:37.10px;top:111.60px;width:844.30px;height:13.60px;background:#fff;border:1px solid #e8eaf0;border-radius:2px;"></div>
<svg style="left:40.80px;top:115.60px;" width="6.4" height="6.4" viewBox="0 0 6.4 6.4"><circle cx="2.6" cy="2.6" r="2" fill="none" stroke="#a0a4ac" stroke-width="0.8"/><path d="M4.1 4.1 L6 6" stroke="#a0a4ac" stroke-width="0.9"/></svg>
<span class="t" style="transform:perspective(100000px) translate3d(50.90px,116.20px,1px);font-size:6.60px;line-height:6.60px;letter-spacing:0.000px;color:#a4a8b0;">Filter monitor groups and their events</span>
<div style="left:40.60px;top:132.20px;width:4.70px;height:4.70px;background:#fff;border:0.6px solid #dde0e7;border-radius:1px;"></div>
<div style="left:47.10px;top:131.50px;width:2.00px;height:5.90px;background:#cc2740;border-radius:0.5px;"></div>
<span class="t" style="transform:perspective(100000px) translate3d(51.50px,132.54px,1px);font-size:5.46px;line-height:5.46px;letter-spacing:-0.005px;color:#3a3d44;">Alert</span>
<span class="t" style="transform:perspective(100000px) translate3d(64.60px,132.54px,1px);font-size:5.46px;line-height:5.46px;letter-spacing:-0.437px;color:#9a9ea6;">2</span>
<div style="left:75.60px;top:132.20px;width:4.70px;height:4.70px;background:#fff;border:0.6px solid #dde0e7;border-radius:1px;"></div>
<div style="left:82.60px;top:131.50px;width:2.00px;height:5.90px;background:#f29322;border-radius:0.5px;"></div>
<span class="t" style="transform:perspective(100000px) translate3d(86.80px,132.54px,1px);font-size:5.46px;line-height:5.46px;letter-spacing:-0.061px;color:#3a3d44;">Warn</span>
<span class="t" style="transform:perspective(100000px) translate3d(101.80px,132.54px,1px);font-size:5.46px;line-height:5.46px;letter-spacing:-0.437px;color:#9a9ea6;">0</span>
<div style="left:113.10px;top:132.20px;width:4.70px;height:4.70px;background:#fff;border:0.6px solid #dde0e7;border-radius:1px;"></div>
<div style="left:119.60px;top:131.50px;width:2.00px;height:5.90px;background:#666c88;border-radius:0.5px;"></div>
<span class="t" style="transform:perspective(100000px) translate3d(123.60px,132.54px,1px);font-size:5.46px;line-height:5.46px;letter-spacing:0.053px;color:#3a3d44;">No Data</span>
<span class="t" style="transform:perspective(100000px) translate3d(145.90px,132.54px,1px);font-size:5.46px;line-height:5.46px;letter-spacing:-0.437px;color:#9a9ea6;">0</span>
<div style="left:156.80px;top:132.20px;width:4.70px;height:4.70px;background:#fff;border:0.6px solid #dde0e7;border-radius:1px;"></div>
<div style="left:163.60px;top:131.50px;width:2.00px;height:5.90px;background:#2eb85c;border-radius:0.5px;"></div>
<span class="t" style="transform:perspective(100000px) translate3d(167.70px,132.54px,1px);font-size:5.46px;line-height:5.46px;letter-spacing:-0.294px;color:#3a3d44;">OK</span>
<span class="t" style="transform:perspective(100000px) translate3d(177.20px,132.54px,1px);font-size:5.46px;line-height:5.46px;letter-spacing:-0.237px;color:#9a9ea6;">20</span>
<span class="t" style="transform:perspective(100000px) translate3d(194.60px,132.58px,1px);font-size:5.30px;line-height:5.30px;letter-spacing:0.002px;color:#2f3237;font-weight:700;">22 of 22 groups</span>
<div style="left:676.60px;top:128.80px;width:154.20px;height:11.20px;background:#fff;border:1px solid #f0f2f5;border-radius:2px;"></div>
<div style="left:680.00px;top:131.20px;width:17.00px;height:6.60px;background:#e4e6ee;border-radius:1.5px;"></div>
<span class="t" style="transform:perspective(100000px) translate3d(686.20px,133.00px,1px);font-size:4.33px;line-height:4.33px;letter-spacing:-0.108px;color:#4a4e58;">4h</span>
<span class="t" style="transform:perspective(100000px) translate3d(700.20px,127.50px,1px);font-size:3.30px;line-height:3.30px;letter-spacing:-0.127px;color:#9a9ea6;">UTC</span>
<span class="t" style="transform:perspective(100000px) translate3d(700.20px,132.24px,1px);font-size:5.46px;line-height:5.46px;letter-spacing:-0.013px;color:#2f3237;">Past 4 Hours</span>
<span class="t" style="transform:perspective(100000px) translate3d(814.20px,132.44px,1px);font-size:5.00px;line-height:5.00px;letter-spacing:1.935px;color:#8a8e96;">‖</span>
<svg style="left:824.00px;top:133.80px;" width="3.2" height="1.6" viewBox="0 0 4 2"><path d="M0 0 H4 L2 2 Z" fill="#3a3d44"/></svg>
<div style="left:834.60px;top:128.80px;width:32.60px;height:11.20px;background:#fff;border:1px solid #eef0f4;border-radius:2px;"></div>
<div style="left:845.60px;top:128.80px;width:11.20px;height:11.20px;background:#0b62c4;border-radius:1px;"></div>
<svg style="left:838.00px;top:132.30px;" width="5" height="4.2" viewBox="0 0 6 5"><path d="M2.8 0.3 V4.7 L0.3 2.5 Z M5.6 0.3 V4.7 L3.1 2.5 Z" fill="#3a3d44"/></svg>
<svg style="left:848.80px;top:131.40px;" width="5" height="6" viewBox="0 0 5 6"><path d="M0.6 0.4 H2 V5.6 H0.6 Z M3 0.4 H4.4 V5.6 H3 Z" fill="#fff"/></svg>
<svg style="left:859.20px;top:132.30px;" width="5" height="4.2" viewBox="0 0 6 5"><path d="M0.4 0.3 V4.7 L2.9 2.5 Z M3.2 0.3 V4.7 L5.7 2.5 Z" fill="#c0c4cc"/></svg>
<div style="left:871.40px;top:128.80px;width:10.00px;height:11.20px;background:#fff;border:1px solid #eef0f4;border-radius:2px;"></div>
<svg style="left:873.60px;top:131.60px;" width="6" height="6" viewBox="0 0 6 6"><circle cx="2.5" cy="2.5" r="1.8" fill="none" stroke="#6a6e78" stroke-width="0.7"/><path d="M3.8 3.8 L5.6 5.6" stroke="#6a6e78" stroke-width="0.7"/></svg>
<div style="left:26.60px;top:145.80px;width:866.00px;height:0.80px;background:#eceef2;"></div>
<svg style="left:34.90px;top:152.80px;" width="6" height="6" viewBox="0 0 7 7"><path d="M0.8 2 L3.5 4.8 L6.2 2" fill="none" stroke="#55595f" stroke-width="0.9"/></svg>
<span class="t" style="transform:perspective(100000px) translate3d(44.20px,152.30px,1px);font-size:7.47px;line-height:7.47px;letter-spacing:0.003px;color:#2f3237;">Status &amp; History</span>
<span class="t" style="transform:perspective(100000px) translate3d(94.20px,186.31px,1px);font-size:4.63px;line-height:4.63px;letter-spacing:-0.051px;color:#3a3d44;font-weight:700;">GROUP STATUS</span>
<span class="t" style="transform:perspective(100000px) translate3d(117.00px,208.90px,1px);font-size:4.63px;line-height:4.63px;letter-spacing:0.192px;color:#3a3d44;font-weight:700;">NAME</span>
<span class="t" style="transform:perspective(100000px) translate3d(578.60px,184.88px,1px);font-size:5.30px;line-height:5.30px;letter-spacing:0.010px;color:#2f3237;font-weight:700;">Showing 5 of 22 groups</span>
<div style="left:641.90px;top:183.40px;width:0.70px;height:7.40px;background:#e8eaef;"></div>
<span class="t" style="transform:perspective(100000px) translate3d(645.60px,185.04px,1px);font-size:5.41px;line-height:5.41px;letter-spacing:0.018px;color:#3a3d44;">Groups per page:</span>
<div style="left:692.60px;top:181.60px;width:19.20px;height:10.80px;background:#fff;border:1px solid #eef0f4;border-radius:2px;"></div>
<span class="t" style="transform:perspective(100000px) translate3d(696.80px,185.14px,1px);font-size:5.00px;line-height:5.00px;letter-spacing:-0.181px;color:#5a5e68;">5</span>
<svg style="left:705.00px;top:186.40px;" width="3.2" height="1.6" viewBox="0 0 4 2"><path d="M0 0 H4 L2 2 Z" fill="#3a3d44"/></svg>
<div style="left:716.20px;top:183.40px;width:0.70px;height:7.40px;background:#e8eaef;"></div>
<svg style="left:721.80px;top:184.20px;" width="6.4" height="6" viewBox="0 0 6.4 6"><path d="M6 3 H0.8 M2.8 0.9 L0.7 3 L2.8 5.1" fill="none" stroke="#c9cdd5" stroke-width="0.8"/></svg>
<div style="left:732.40px;top:181.60px;width:10.60px;height:10.80px;background:#0b62c4;border-radius:1.5px;"></div>
<span class="t" style="transform:perspective(100000px) translate3d(736.40px,184.98px,1px);font-size:5.00px;line-height:5.00px;letter-spacing:-0.181px;color:#fff;font-weight:700;">1</span>
<span class="t" style="transform:perspective(100000px) translate3d(749.20px,185.14px,1px);font-size:5.00px;line-height:5.00px;letter-spacing:0.019px;color:#2c6cb8;">2</span>
<span class="t" style="transform:perspective(100000px) translate3d(762.20px,185.14px,1px);font-size:5.00px;line-height:5.00px;letter-spacing:0.019px;color:#2c6cb8;">3</span>
<span class="t" style="transform:perspective(100000px) translate3d(775.20px,185.14px,1px);font-size:5.00px;line-height:5.00px;letter-spacing:0.019px;color:#2c6cb8;">4</span>
<span class="t" style="transform:perspective(100000px) translate3d(788.20px,185.14px,1px);font-size:5.00px;line-height:5.00px;letter-spacing:0.019px;color:#2c6cb8;">5</span>
<svg style="left:799.80px;top:184.20px;" width="6.4" height="6" viewBox="0 0 6.4 6"><path d="M0.4 3 H5.6 M3.6 0.9 L5.7 3 L3.6 5.1" fill="none" stroke="#3a78c2" stroke-width="0.8"/></svg>
<div style="left:811.20px;top:183.40px;width:0.70px;height:7.40px;background:#e8eaef;"></div>
<span class="t" style="transform:perspective(100000px) translate3d(816.00px,185.04px,1px);font-size:5.41px;line-height:5.41px;letter-spacing:-0.020px;color:#3a3d44;">Sort by</span>
<div style="left:837.00px;top:181.60px;width:44.20px;height:10.80px;background:#fff;border:1px solid #eef0f4;border-radius:2px;"></div>
<span class="t" style="transform:perspective(100000px) translate3d(840.60px,185.04px,1px);font-size:5.00px;line-height:5.00px;letter-spacing:-0.002px;color:#3a3d44;">Triggered</span>
<span class="t" style="left:863.00px;top:184.00px;font-size:5.4px;line-height:6px;color:#3a3d44;font-family:'DejaVu Sans',sans-serif;">↓</span>
<svg style="left:874.40px;top:186.40px;" width="3.2" height="1.6" viewBox="0 0 4 2"><path d="M0 0 H4 L2 2 Z" fill="#3a3d44"/></svg>
<span class="t" style="transform:perspective(100000px) translate3d(848.60px,207.90px,1px);font-size:4.63px;line-height:4.63px;letter-spacing:0.050px;color:#3a3d44;font-weight:700;">VALUE</span>
<div style="left:137.20px;top:216.60px;width:520.80px;height:10.00px;background:#78d192;"></div>
<div style="left:658.00px;top:216.60px;width:173.00px;height:10.00px;background:#41c464;"></div>
<span class="t" style="transform:perspective(100000px) translate3d(68.40px,220.94px,1px);font-size:5.61px;line-height:5.61px;letter-spacing:0.006px;color:#4a4e56;">region: us-east-1</span>
<span class="t" style="transform:perspective(100000px) translate3d(853.29px,220.84px,1px);font-size:5.00px;line-height:5.00px;letter-spacing:0.000px;color:#4a4e56;">56.32</span>
<div style="left:137.20px;top:232.80px;width:520.80px;height:10.00px;background:#78d192;"></div>
<div style="left:658.00px;top:232.80px;width:173.00px;height:10.00px;background:#41c464;"></div>
<span class="t" style="transform:perspective(100000px) translate3d(68.40px,236.54px,1px);font-size:5.61px;line-height:5.61px;letter-spacing:-0.013px;color:#4a4e56;">region: us-west-1</span>
<span class="t" style="transform:perspective(100000px) translate3d(853.29px,236.54px,1px);font-size:5.00px;line-height:5.00px;letter-spacing:0.000px;color:#4a4e56;">86.57</span>
<div style="left:137.20px;top:247.90px;width:520.80px;height:10.00px;background:#f06d7c;"></div>
<div style="left:658.00px;top:247.90px;width:173.00px;height:10.00px;background:#ea364c;"></div>
<span class="t" style="transform:perspective(100000px) translate3d(68.40px,252.24px,1px);font-size:5.61px;line-height:5.61px;letter-spacing:0.045px;color:#4a4e56;">region: southcentralus</span>
<span class="t" style="transform:perspective(100000px) translate3d(850.51px,252.14px,1px);font-size:5.00px;line-height:5.00px;letter-spacing:0.000px;color:#4a4e56;">213.85</span>
<div style="left:137.20px;top:263.50px;width:520.80px;height:10.00px;background:#f06d7c;"></div>
<div style="left:658.00px;top:263.50px;width:173.00px;height:10.00px;background:#ea364c;"></div>
<span class="t" style="transform:perspective(100000px) translate3d(68.40px,267.84px,1px);font-size:5.61px;line-height:5.61px;letter-spacing:-0.037px;color:#4a4e56;">region: eastus2</span>
<span class="t" style="transform:perspective(100000px) translate3d(853.29px,267.74px,1px);font-size:5.00px;line-height:5.00px;letter-spacing:0.000px;color:#4a4e56;">863.8</span>
<div style="left:137.20px;top:279.20px;width:520.80px;height:10.00px;background:#78d192;"></div>
<div style="left:658.00px;top:279.20px;width:173.00px;height:10.00px;background:#41c464;"></div>
<span class="t" style="transform:perspective(100000px) translate3d(68.40px,283.54px,1px);font-size:5.61px;line-height:5.61px;letter-spacing:0.010px;color:#4a4e56;">region: us-west-2</span>
<span class="t" style="transform:perspective(100000px) translate3d(856.07px,283.44px,1px);font-size:5.00px;line-height:5.00px;letter-spacing:0.000px;color:#4a4e56;">0.07</span>
<div style="left:137.20px;top:293.80px;width:696.00px;height:1.00px;background:#cdd1da;"></div>
<div style="left:154.45px;top:294.80px;width:0.70px;height:2.20px;background:#b4b8c0;"></div>
<span class="t" style="transform:perspective(100000px) translate3d(149.80px,298.20px,1px);font-size:4.00px;line-height:4.00px;letter-spacing:0.000px;color:#50545c;">13:30</span>
<div style="left:197.92px;top:294.80px;width:0.70px;height:2.20px;background:#b4b8c0;"></div>
<span class="t" style="transform:perspective(100000px) translate3d(193.27px,298.20px,1px);font-size:4.00px;line-height:4.00px;letter-spacing:0.000px;color:#50545c;">13:45</span>
<div style="left:241.39px;top:294.80px;width:0.70px;height:2.20px;background:#b4b8c0;"></div>
<span class="t" style="transform:perspective(100000px) translate3d(236.74px,298.20px,1px);font-size:4.00px;line-height:4.00px;letter-spacing:0.000px;color:#50545c;">14:00</span>
<div style="left:284.86px;top:294.80px;width:0.70px;height:2.20px;background:#b4b8c0;"></div>
<span class="t" style="transform:perspective(100000px) translate3d(280.21px,298.20px,1px);font-size:4.00px;line-height:4.00px;letter-spacing:0.000px;color:#50545c;">14:15</span>
<div style="left:328.33px;top:294.80px;width:0.70px;height:2.20px;background:#b4b8c0;"></div>
<span class="t" style="transform:perspective(100000px) translate3d(323.68px,298.20px,1px);font-size:4.00px;line-height:4.00px;letter-spacing:0.000px;color:#50545c;">14:30</span>
<div style="left:371.80px;top:294.80px;width:0.70px;height:2.20px;background:#b4b8c0;"></div>
<span class="t" style="transform:perspective(100000px) translate3d(367.15px,298.20px,1px);font-size:4.00px;line-height:4.00px;letter-spacing:0.000px;color:#50545c;">14:45</span>
<div style="left:415.27px;top:294.80px;width:0.70px;height:2.20px;background:#b4b8c0;"></div>
<span class="t" style="transform:perspective(100000px) translate3d(410.62px,298.20px,1px);font-size:4.00px;line-height:4.00px;letter-spacing:0.000px;color:#50545c;">15:00</span>
<div style="left:458.74px;top:294.80px;width:0.70px;height:2.20px;background:#b4b8c0;"></div>
<span class="t" style="transform:perspective(100000px) translate3d(454.09px,298.20px,1px);font-size:4.00px;line-height:4.00px;letter-spacing:0.000px;color:#50545c;">15:15</span>
<div style="left:502.21px;top:294.80px;width:0.70px;height:2.20px;background:#b4b8c0;"></div>
<span class="t" style="transform:perspective(100000px) translate3d(497.56px,298.20px,1px);font-size:4.00px;line-height:4.00px;letter-spacing:0.000px;color:#50545c;">15:30</span>
<div style="left:545.68px;top:294.80px;width:0.70px;height:2.20px;background:#b4b8c0;"></div>
<span class="t" style="transform:perspective(100000px) translate3d(541.03px,298.20px,1px);font-size:4.00px;line-height:4.00px;letter-spacing:0.000px;color:#50545c;">15:45</span>
<div style="left:589.15px;top:294.80px;width:0.70px;height:2.20px;background:#b4b8c0;"></div>
<span class="t" style="transform:perspective(100000px) translate3d(584.50px,298.20px,1px);font-size:4.00px;line-height:4.00px;letter-spacing:0.000px;color:#50545c;">16:00</span>
<div style="left:632.62px;top:294.80px;width:0.70px;height:2.20px;background:#b4b8c0;"></div>
<span class="t" style="transform:perspective(100000px) translate3d(627.97px,298.20px,1px);font-size:4.00px;line-height:4.00px;letter-spacing:0.000px;color:#50545c;">16:15</span>
<div style="left:676.09px;top:294.80px;width:0.70px;height:2.20px;background:#b4b8c0;"></div>
<span class="t" style="transform:perspective(100000px) translate3d(671.44px,298.20px,1px);font-size:4.00px;line-height:4.00px;letter-spacing:0.000px;color:#50545c;">16:30</span>
<div style="left:719.56px;top:294.80px;width:0.70px;height:2.20px;background:#b4b8c0;"></div>
<span class="t" style="transform:perspective(100000px) translate3d(714.91px,298.20px,1px);font-size:4.00px;line-height:4.00px;letter-spacing:0.000px;color:#50545c;">16:45</span>
<div style="left:763.03px;top:294.80px;width:0.70px;height:2.20px;background:#b4b8c0;"></div>
<span class="t" style="transform:perspective(100000px) translate3d(758.38px,298.20px,1px);font-size:4.00px;line-height:4.00px;letter-spacing:0.000px;color:#50545c;">17:00</span>
<div style="left:806.50px;top:294.80px;width:0.70px;height:2.20px;background:#b4b8c0;"></div>
<span class="t" style="transform:perspective(100000px) translate3d(801.85px,298.20px,1px);font-size:4.00px;line-height:4.00px;letter-spacing:0.000px;color:#50545c;">17:15</span>
<div style="left:137.20px;top:294.80px;width:0.70px;height:2.40px;background:#b4b8c0;"></div>
<div style="left:832.60px;top:294.80px;width:0.70px;height:2.40px;background:#b4b8c0;"></div>
<div style="left:140.40px;top:312.60px;width:6.30px;height:6.30px;background:#e8364b;border-radius:1px;"></div>
<span class="t" style="transform:perspective(100000px) translate3d(148.60px,314.40px,1px);font-size:3.90px;line-height:3.90px;letter-spacing:0.116px;color:#4a4e56;">Alert</span>
<div style="left:163.80px;top:312.60px;width:6.30px;height:6.30px;background:#41c464;border-radius:1px;"></div>
<span class="t" style="transform:perspective(100000px) translate3d(172.20px,314.40px,1px);font-size:3.90px;line-height:3.90px;letter-spacing:-0.317px;color:#4a4e56;">OK</span>
<div style="left:184.00px;top:312.60px;width:6.30px;height:6.30px;background:#7c84a8;border-radius:1px;"></div>
<span class="t" style="transform:perspective(100000px) translate3d(192.40px,314.40px,1px);font-size:3.90px;line-height:3.90px;letter-spacing:0.070px;color:#4a4e56;">No Data</span>
<div style="left:213.80px;top:312.60px;width:6.30px;height:6.30px;background:#f5a02c;border-radius:1px;"></div>
<span class="t" style="transform:perspective(100000px) translate3d(222.20px,314.40px,1px);font-size:3.90px;line-height:3.90px;letter-spacing:-0.093px;color:#4a4e56;">Warn</span>
<div style="left:238.40px;top:312.60px;width:6.30px;height:6.30px;background:#fff;border:0.6px dashed #c4c8d0;border-radius:1px;"></div>
<svg style="left:238.40px;top:312.60px;" width="6.3" height="6.3" viewBox="0 0 6.3 6.3"><path d="M1 1 L5.3 5.3 M5.3 1 L1 5.3" stroke="#b4b8c0" stroke-width="0.6"/></svg>
<span class="t" style="transform:perspective(100000px) translate3d(246.60px,314.40px,1px);font-size:3.90px;line-height:3.90px;letter-spacing:0.192px;color:#4a4e56;">Muted</span>
<div style="left:657.60px;top:212.20px;width:173.80px;height:132.40px;border:1px solid rgba(44,48,60,0.62);border-radius:1px;"></div>
<div style="left:657.60px;top:330.40px;width:173.80px;height:14.20px;background:#40444f;border-radius:0 0 1px 1px;"></div>
<span class="t" style="transform:perspective(100000px) translate3d(741.00px,335.54px,1px);font-size:5.60px;line-height:5.60px;letter-spacing:0.332px;color:#fff;font-weight:700;">1h</span>
<svg style="left:735.20px;top:334.40px;" width="4" height="6" viewBox="0 0 4 6"><path d="M0.6 0.8 H3.4 M0.6 2.4 H3.4 M0.6 4 H3.4 M0.6 5.4 H3.4" stroke="#8a8e98" stroke-width="0.5"/></svg>
<svg style="left:750.00px;top:334.40px;" width="4" height="6" viewBox="0 0 4 6"><path d="M0.6 0.8 H3.4 M0.6 2.4 H3.4 M0.6 4 H3.4 M0.6 5.4 H3.4" stroke="#8a8e98" stroke-width="0.5"/></svg>
<div style="left:138.20px;top:358.40px;width:693px;height:10px;border-top:0.8px dotted #c4c8d0;border-left:0.8px dotted #c4c8d0;border-right:0.8px dotted #c4c8d0;border-radius:2px 2px 0 0;"></div>
<svg style="left:738.60px;top:354.20px;" width="12" height="5" viewBox="0 0 12 5"><path d="M0.5 4.6 L6 0.8 L11.5 4.6" fill="#fff" stroke="#a4a8b0" stroke-width="0.7"/></svg>
</div>
</div>
</body>
</html>
